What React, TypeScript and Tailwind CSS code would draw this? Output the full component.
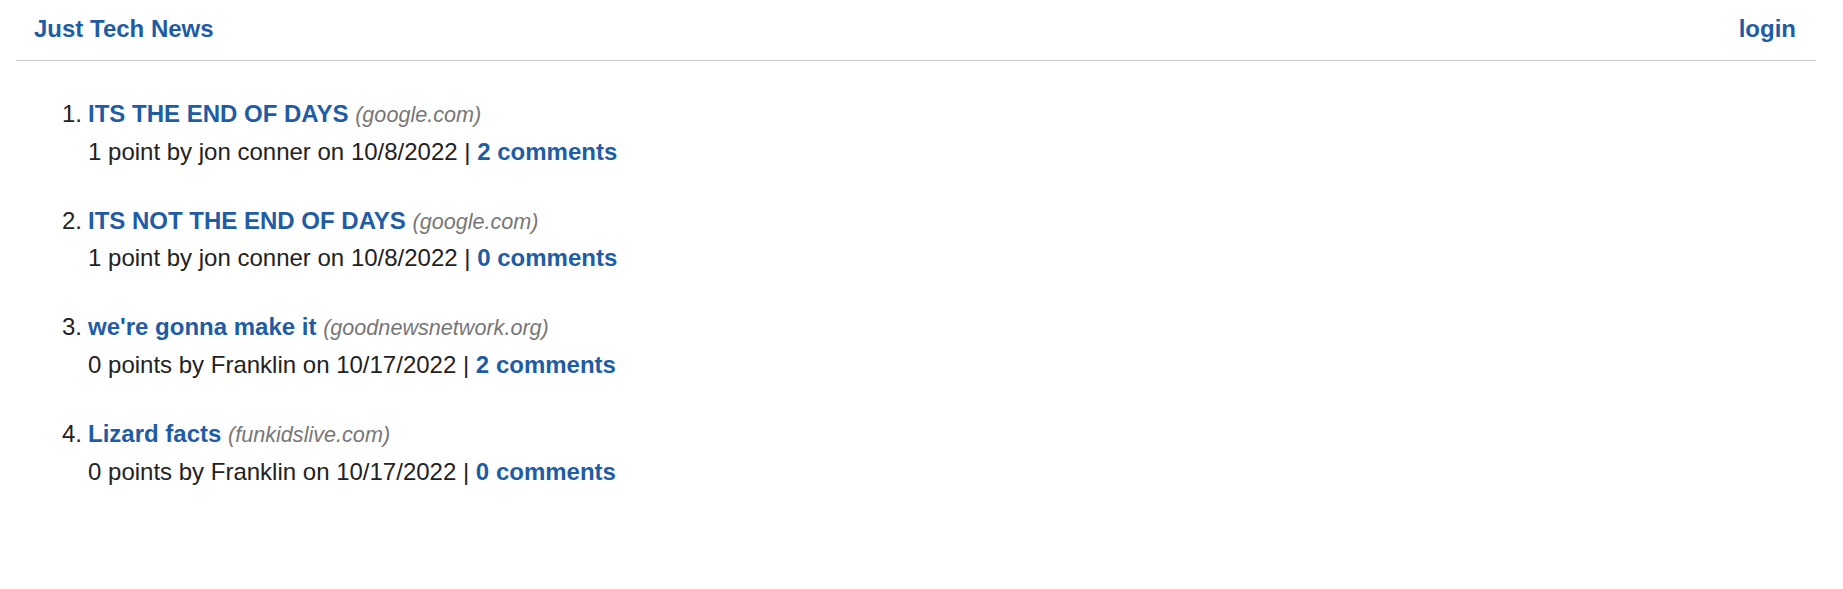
import React from 'react'

type Post = {
  title: string
  domain: string
  points: number
  author: string
  date: string
  comments: number
}

const posts: Post[] = [
  { title: 'ITS THE END OF DAYS', domain: 'google.com', points: 1, author: 'jon conner', date: '10/8/2022', comments: 2 },
  { title: 'ITS NOT THE END OF DAYS', domain: 'google.com', points: 1, author: 'jon conner', date: '10/8/2022', comments: 0 },
  { title: "we're gonna make it", domain: 'goodnewsnetwork.org', points: 0, author: 'Franklin', date: '10/17/2022', comments: 2 },
  { title: 'Lizard facts', domain: 'funkidslive.com', points: 0, author: 'Franklin', date: '10/17/2022', comments: 0 },
]

function Header() {
  return (
    <header className="ml-[16px] mr-[27px] h-[61px] border-b border-[#cccccc] pt-[16px] pl-[18px] pr-[20px] flex justify-between">
      <a className="text-[24px] leading-[26px] font-bold text-[#1f5ca6]">Just Tech News</a>
      <a className="text-[24px] leading-[26px] font-bold text-[#1f5ca6]">login</a>
    </header>
  )
}

export default function App() {
  return (
    <div className="min-h-screen bg-white text-[#222222] font-['Liberation_Sans',Arial,sans-serif]">
      <Header />
      <ol className="pt-[35px]">
        {posts.map((p, i) => (
          <li key={i} className="flex mb-[32px] text-[24px] leading-[36.8px]">
            <span className="w-[88px] pr-[6px] text-right shrink-0">{i + 1}.</span>
            <div>
              <div>
                <a className="font-bold text-[#1f5ca6]">{p.title}</a>{' '}
                <span className="italic text-[21.6px] text-[#777777]">({p.domain})</span>
              </div>
              <div>
                {p.points} {p.points === 1 ? 'point' : 'points'} by {p.author} on {p.date} |{' '}
                <a className="font-bold text-[#1f5ca6]">{p.comments} comments</a>
              </div>
            </div>
          </li>
        ))}
      </ol>
    </div>
  )
}
